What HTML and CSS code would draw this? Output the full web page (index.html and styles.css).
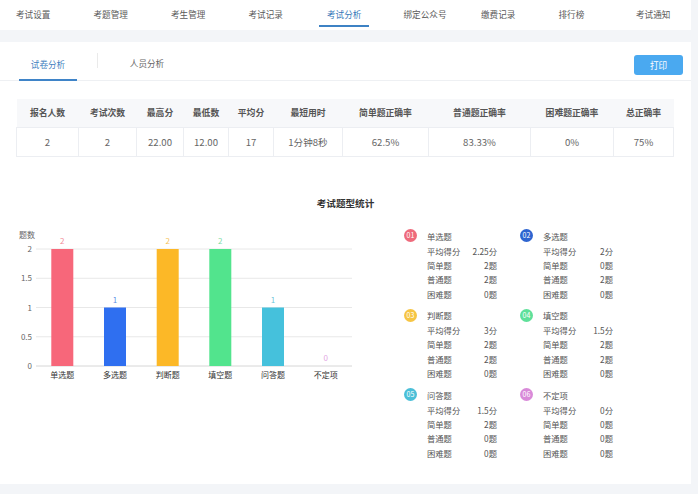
FILE: index.html
```html
<!DOCTYPE html>
<html lang="zh">
<head>
<meta charset="utf-8">
<title>考试分析</title>
<link rel="stylesheet" href="styles.css">
</head>
<body>
<div class="page">
  <nav class="topnav">
    <div class="nav-item"><span>考试设置</span></div>
    <div class="nav-item"><span>考题管理</span></div>
    <div class="nav-item"><span>考生管理</span></div>
    <div class="nav-item"><span>考试记录</span></div>
    <div class="nav-item active"><span>考试分析</span></div>
    <div class="nav-item"><span>绑定公众号</span></div>
    <div class="nav-item"><span>缴费记录</span></div>
    <div class="nav-item"><span>排行榜</span></div>
    <div class="nav-item"><span>考试通知</span></div>
  </nav>

  <main class="card">
    <div class="card-head">
      <div class="sub-tab active">试卷分析</div>
      <div class="sub-sep"></div>
      <div class="sub-tab">人员分析</div>
      <button class="print-btn">打印</button>
    </div>

    <table class="stats">
      <colgroup>
        <col style="width:62px"><col style="width:58px"><col style="width:47px"><col style="width:45px"><col style="width:45px"><col style="width:69px"><col style="width:86px"><col style="width:102px"><col style="width:83px"><col style="width:60px">
      </colgroup>
      <thead>
        <tr><th>报名人数</th><th>考试次数</th><th>最高分</th><th>最低数</th><th>平均分</th><th>最短用时</th><th>简单题正确率</th><th>普通题正确率</th><th>困难题正确率</th><th>总正确率</th></tr>
      </thead>
      <tbody>
        <tr><td>2</td><td>2</td><td>22.00</td><td>12.00</td><td>17</td><td>1分钟8秒</td><td>62.5%</td><td>83.33%</td><td>0%</td><td>75%</td></tr>
      </tbody>
    </table>

    <h2 class="chart-title">考试题型统计</h2>

    <div class="chart-area">
      <svg class="chart" width="380" height="172" viewBox="0 0 380 172">
        <text class="axis-name" x="27" y="23">题数</text>
        <g class="grid">
          <line x1="36" y1="34" x2="352" y2="34"/>
          <line x1="36" y1="63.25" x2="352" y2="63.25"/>
          <line x1="36" y1="92.5" x2="352" y2="92.5"/>
          <line x1="36" y1="121.75" x2="352" y2="121.75"/>
          <line class="base" x1="36" y1="151" x2="352" y2="151"/>
        </g>
        <g class="ticks">
          <text x="32" y="37">2</text>
          <text x="32" y="66.25">1.5</text>
          <text x="32" y="95.5">1</text>
          <text x="32" y="124.75">0.5</text>
          <text x="32" y="154">0</text>
        </g>
        <rect x="51.3" y="34" width="22" height="117" fill="#f7677a"/>
        <rect x="104" y="92.5" width="22" height="58.5" fill="#2f6ff0"/>
        <rect x="156.7" y="34" width="22" height="117" fill="#fcb827"/>
        <rect x="209.3" y="34" width="22" height="117" fill="#52e48d"/>
        <rect x="262" y="92.5" width="22" height="58.5" fill="#45c1dc"/>
        <g class="vals">
          <text x="62.3" y="29" fill="#f28b97">2</text>
          <text x="115" y="87.5" fill="#5d8fe6">1</text>
          <text x="167.7" y="29" fill="#f6c35a">2</text>
          <text x="220.3" y="29" fill="#7fdca6">2</text>
          <text x="273" y="87.5" fill="#6fc6da">1</text>
          <text x="325.7" y="146" fill="#e3a6e3">0</text>
        </g>
        <g class="cats">
          <text x="62.3" y="163">单选题</text>
          <text x="115" y="163">多选题</text>
          <text x="167.7" y="163">判断题</text>
          <text x="220.3" y="163">填空题</text>
          <text x="273" y="163">问答题</text>
          <text x="325.7" y="163">不定项</text>
        </g>
      </svg>

      <div class="legend">
        <div class="group">
          <div class="g-head"><span class="badge b1">01</span>单选题</div>
          <div class="g-row"><span>平均得分</span><span>2.25分</span></div>
          <div class="g-row"><span>简单题</span><span>2题</span></div>
          <div class="g-row"><span>普通题</span><span>2题</span></div>
          <div class="g-row"><span>困难题</span><span>0题</span></div>
        </div>
        <div class="group">
          <div class="g-head"><span class="badge b2">02</span>多选题</div>
          <div class="g-row"><span>平均得分</span><span>2分</span></div>
          <div class="g-row"><span>简单题</span><span>0题</span></div>
          <div class="g-row"><span>普通题</span><span>2题</span></div>
          <div class="g-row"><span>困难题</span><span>0题</span></div>
        </div>
        <div class="group">
          <div class="g-head"><span class="badge b3">03</span>判断题</div>
          <div class="g-row"><span>平均得分</span><span>3分</span></div>
          <div class="g-row"><span>简单题</span><span>2题</span></div>
          <div class="g-row"><span>普通题</span><span>2题</span></div>
          <div class="g-row"><span>困难题</span><span>0题</span></div>
        </div>
        <div class="group">
          <div class="g-head"><span class="badge b4">04</span>填空题</div>
          <div class="g-row"><span>平均得分</span><span>1.5分</span></div>
          <div class="g-row"><span>简单题</span><span>2题</span></div>
          <div class="g-row"><span>普通题</span><span>2题</span></div>
          <div class="g-row"><span>困难题</span><span>0题</span></div>
        </div>
        <div class="group">
          <div class="g-head"><span class="badge b5">05</span>问答题</div>
          <div class="g-row"><span>平均得分</span><span>1.5分</span></div>
          <div class="g-row"><span>简单题</span><span>2题</span></div>
          <div class="g-row"><span>普通题</span><span>0题</span></div>
          <div class="g-row"><span>困难题</span><span>0题</span></div>
        </div>
        <div class="group">
          <div class="g-head"><span class="badge b6">06</span>不定项</div>
          <div class="g-row"><span>平均得分</span><span>0分</span></div>
          <div class="g-row"><span>简单题</span><span>0题</span></div>
          <div class="g-row"><span>普通题</span><span>0题</span></div>
          <div class="g-row"><span>困难题</span><span>0题</span></div>
        </div>
      </div>
    </div>
  </main>
</div>
</body>
</html>
```

FILE: styles.css
```css
* { box-sizing: border-box; }

html, body {
  margin: 0;
  padding: 0;
  background: #f3f5f8;
  font-family: "Noto Sans CJK SC", "Noto Sans", sans-serif;
  color: #555;
}

.page {
  width: 691px;
  height: 494px;
}

.topnav {
  display: flex;
  height: 30px;
  background: #fff;
}

.nav-item {
  flex: none;
  width: 77.5px;
  height: 30px;
  padding-left: 16px;
  font-size: 8.6px;
  color: #5a5a5a;
  white-space: nowrap;
}

.nav-item span {
  display: inline-block;
  line-height: 12px;
  padding: 8px 0 6px;
}

.nav-item.active span {
  color: #3677b8;
  padding: 8px 8px 5px;
  margin-left: -7px;
  border-bottom: 2px solid #3d82c4;
}

.card {
  margin-top: 12px;
  height: 442px;
  background: #fff;
}

.card-head {
  display: flex;
  align-items: flex-end;
  height: 39px;
  border-bottom: 1px solid #eef0f3;
  padding-left: 19px;
}

.sub-tab {
  width: 58px;
  text-align: center;
  font-size: 8.6px;
  line-height: 12px;
  padding-bottom: 11px;
  color: #666;
}

.sub-tab.active {
  color: #3f7fc0;
  border-bottom: 2px solid #3f84c8;
  padding-bottom: 9px;
  margin-bottom: -1px;
}

.sub-sep {
  width: 1px;
  height: 15px;
  background: #eaeaea;
  margin: 0 20px 12px;
}

.print-btn {
  margin-left: auto;
  margin-right: 8px;
  align-self: flex-start;
  margin-top: 13px;
  width: 49px;
  height: 20px;
  border: none;
  border-radius: 3px;
  background: #4aa9f0;
  color: #fff;
  font-family: inherit;
  font-size: 8.6px;
  padding: 0;
}

.stats {
  margin: 18px 0 0 16px;
  width: 657px;
  border-collapse: collapse;
  table-layout: fixed;
  font-size: 8.8px;
  text-align: center;
}

.stats th {
  height: 28px;
  background: #f7f8fa;
  font-weight: 600;
  color: #555;
  padding: 0;
}

.stats td {
  height: 29px;
  border: 1px solid #eceef2;
  color: #666;
  font-size: 9.6px;
  padding: 0;
}

.chart-title {
  margin: 39px 0 0;
  text-align: center;
  font-size: 9.6px;
  line-height: 14px;
  font-weight: 700;
  color: #333;
}

.chart-area {
  display: flex;
  margin-top: 5px;
}

.chart {
  display: block;
  flex: none;
  font-family: "Noto Sans CJK SC", "Noto Sans", sans-serif;
}

.chart .axis-name {
  font-size: 8px;
  fill: #666;
  text-anchor: middle;
}

.chart .grid line {
  stroke: #e8e8e8;
  stroke-width: 1;
}

.chart .grid line.base {
  stroke: #d6d6d6;
}

.chart .ticks text {
  font-size: 8px;
  fill: #666;
  text-anchor: end;
}

.chart .vals text {
  font-size: 8px;
  text-anchor: middle;
}

.chart .cats text {
  font-size: 8px;
  fill: #333;
  text-anchor: middle;
}

.legend {
  margin: 13px 0 0 24px;
  display: grid;
  grid-template-columns: 93px 93px;
  column-gap: 23px;
  row-gap: 6px;
  align-content: start;
}

.group {
  font-size: 8.3px;
  color: #555;
}

.g-head {
  display: flex;
  align-items: center;
  height: 16px;
}

.badge {
  width: 13px;
  height: 13px;
  border-radius: 50%;
  margin-right: 10px;
  color: #fff;
  font-size: 7px;
  line-height: 13px;
  text-align: center;
  flex: none;
}

.b1 { background: #ee6b7c; }
.b2 { background: #2e65d0; }
.b3 { background: #f6c544; }
.b4 { background: #5fe09a; }
.b5 { background: #4bbfd8; }
.b6 { background: #d98ad9; }

.g-row {
  display: flex;
  justify-content: space-between;
  height: 14.4px;
  line-height: 14.4px;
  padding-left: 23px;
}
```
